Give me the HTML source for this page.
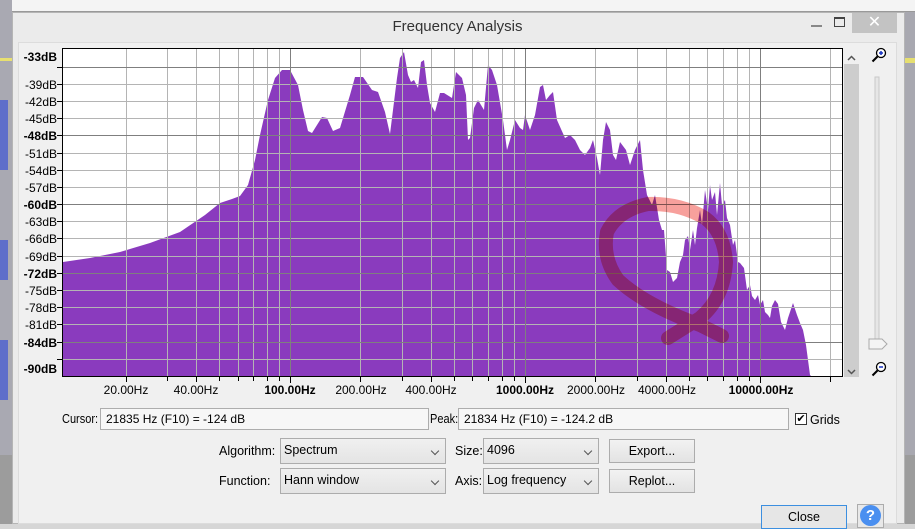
<!DOCTYPE html>
<html><head><meta charset="utf-8"><style>
*{margin:0;padding:0;box-sizing:border-box}
body{width:915px;height:524px;overflow:hidden;background:#d6d6d6;font-family:"Liberation Sans",sans-serif;font-size:12px;color:#000;position:relative}
.a{position:absolute}
.box{position:absolute;background:#f7f7f7;border:1px solid #adadad;height:22px;padding:3px 0 0 5px;font-size:12px}
.sel{position:absolute;background:linear-gradient(#f0f0f0,#e4e4e4);border:1px solid #acacac;height:26px;padding:4px 0 0 3px;font-size:12.5px}
.sel:after{content:"";position:absolute;right:7px;top:9px;width:5px;height:5px;border-right:1.6px solid #555;border-bottom:1.6px solid #555;transform:rotate(45deg)}
.btn{position:absolute;background:linear-gradient(#f2f2f2,#e3e3e3);border:1px solid #acacac;text-align:center;font-size:12.5px;padding-top:4px}
.lbl{position:absolute;font-size:12.5px}
.sq{transform:scaleX(.88);transform-origin:0 0;z-index:2}
</style></head><body>
<!-- background app -->
<div class="a" style="left:0;top:0;width:915px;height:12px;background:#f4f4f4;border-bottom:1px solid #999"></div>
<div class="a" style="left:0;top:0;width:12px;height:524px;background:#a9a9b2"></div>
<div class="a" style="left:0;top:58px;width:12px;height:3px;background:#e8e070"></div>
<div class="a" style="left:0;top:100px;width:8px;height:70px;background:#4b5fd0;opacity:.8"></div>
<div class="a" style="left:0;top:240px;width:8px;height:40px;background:#4b5fd0;opacity:.8"></div>
<div class="a" style="left:0;top:340px;width:8px;height:60px;background:#4b5fd0;opacity:.8"></div>
<div class="a" style="left:0;top:455px;width:12px;height:69px;background:#9c9c9c"></div>
<div class="a" style="left:905px;top:12px;width:10px;height:512px;background:#a8a8b0"></div>
<div class="a" style="left:905px;top:58px;width:10px;height:5px;background:#e6df70"></div>
<div class="a" style="left:905px;top:455px;width:10px;height:69px;background:#9c9c9c"></div>
<!-- dialog frame -->
<div class="a" style="left:12px;top:12px;width:893px;height:512px;background:#ebebeb;border:1px solid #b5b5b5"></div>
<div class="a" style="left:0;top:18px;width:915px;text-align:center;font-size:15px;color:#333">Frequency Analysis</div>
<div class="a" style="left:811px;top:25px;width:11px;height:2px;background:#888"></div>
<div class="a" style="left:834px;top:17px;width:11px;height:10px;border:1px solid #444;border-top-width:2px"></div>
<div class="a" style="left:852px;top:13px;width:45px;height:20px;background:#c3c3c3;color:#fff;text-align:center;font-size:16px;line-height:20px">✕</div>
<div class="a" style="left:18px;top:42px;width:879px;height:482px;background:#f0f0f0;border:1px solid #dcdcdc"></div>

<svg class="a" style="left:0;top:0" width="915" height="524" viewBox="0 0 915 524">
<rect x="62.5" y="48.5" width="780" height="328" fill="#fff"/>
<polygon fill="#8a3bbe" points="63,377 63,262 90,258 120,252 150,243 180,232 205,215 220,203 232,199 240,196 248,185 255,160 260,135 268,100 275,78 282,70 290,70 298,85 303,110 308,131 312,133 322,117 327,118 333,131 340,128 350,95 355,77 363,77 372,90 378,92 385,112 390,134 393,110 397,78 400,58 404,52 408,75 411,82 414,80 418,88 421,62 424,60 427,85 430,103 435,112 440,93 444,93 452,98 456,72 462,78 466,95 468,140 470,138 474,108 478,100 484,110 488,65 492,70 497,85 503,120 507,150 510,140 515,120 520,128 523,130 525,115 530,130 535,115 540,87 543,85 546,100 550,95 553,92 557,120 565,138 570,135 575,140 580,150 585,155 590,148 593,140 597,158 600,175 603,140 606,122 610,130 613,155 616,160 620,142 626,150 630,165 635,150 640,140 643,170 647,195 652,205 655,195 659,220 662,230 664,230 667,270 670,272 673,282 677,278 680,262 683,255 685,240 688,236 690,250 693,230 695,245 697,228 700,210 702,225 705,190 708,210 710,185 712,200 715,192 717,215 720,183 722,205 725,200 727,218 730,225 733,245 735,240 738,262 740,263 744,268 747,290 750,285 752,296 755,300 758,295 760,305 763,300 765,312 768,315 770,318 772,306 775,300 778,304 781,322 785,330 788,318 790,312 793,303 797,315 800,323 803,330 806,345 808,360 810,375 812,377"/>
<g stroke="#b4b4b4" stroke-width="1">
<path d="M126.5 49V377M167.5 49V377M196.5 49V377M219.5 49V377M238.5 49V377M253.5 49V377M267.5 49V377M279.5 49V377M360.5 49V377M402.5 49V377M431.5 49V377M454.5 49V377M472.5 49V377M488.5 49V377M502.5 49V377M514.5 49V377M595.5 49V377M637.5 49V377M666.5 49V377M689.5 49V377M707.5 49V377M723.5 49V377M737.5 49V377M749.5 49V377M830.5 49V377"/>
<path d="M63 84.5H842M63 101.5H842M63 118.5H842M63 153.5H842M63 170.5H842M63 187.5H842M63 221.5H842M63 238.5H842M63 256.5H842M63 290.5H842M63 307.5H842M63 324.5H842M63 359.5H842"/>
</g>
<g stroke="#7f7f7f" stroke-width="1">
<path d="M290.5 49V377M525.5 49V377M760.5 49V377M63 67.5H842M63 135.5H842M63 204.5H842M63 273.5H842M63 342.5H842"/>
</g>
<path d="M668 338 L700 318 Q724 298 726 262 Q724 232 705 218 Q680 203 648 204 Q618 210 607 232 Q602 258 618 280 Q645 305 700 325 L722 336" fill="none" stroke="#f7a09c" stroke-width="14" stroke-linecap="round" stroke-linejoin="round" style="mix-blend-mode:multiply"/>
<rect x="62.5" y="48.5" width="780" height="328" fill="none" stroke="#000"/>
<g stroke="#000"><path d="M57 67.5H63M57 84.5H63M57 101.5H63M57 118.5H63M57 135.5H63M57 153.5H63M57 170.5H63M57 187.5H63M57 204.5H63M57 221.5H63M57 238.5H63M57 256.5H63M57 273.5H63M57 290.5H63M57 307.5H63M57 324.5H63M57 342.5H63M57 359.5H63"/>
<path d="M126.5 377V382M167.5 377V381M196.5 377V382M219.5 377V381M238.5 377V381M253.5 377V381M267.5 377V381M279.5 377V381M290.5 377V383M360.5 377V382M402.5 377V381M431.5 377V382M454.5 377V381M472.5 377V381M488.5 377V381M502.5 377V381M514.5 377V381M525.5 377V383M595.5 377V382M637.5 377V381M666.5 377V382M689.5 377V381M707.5 377V381M723.5 377V381M737.5 377V381M749.5 377V381M760.5 377V383M830.5 377V382"/></g>
<g font-family="Liberation Sans" font-size="12" text-anchor="end" fill="#000">
<text x="57" y="61" font-weight="bold">-33dB</text><text x="57" y="89">-39dB</text><text x="57" y="106">-42dB</text><text x="57" y="123">-45dB</text><text x="57" y="140" font-weight="bold">-48dB</text><text x="57" y="158">-51dB</text><text x="57" y="175">-54dB</text><text x="57" y="192">-57dB</text><text x="57" y="209" font-weight="bold">-60dB</text><text x="57" y="226">-63dB</text><text x="57" y="243">-66dB</text><text x="57" y="261">-69dB</text><text x="57" y="278" font-weight="bold">-72dB</text><text x="57" y="295">-75dB</text><text x="57" y="312">-78dB</text><text x="57" y="329">-81dB</text><text x="57" y="347" font-weight="bold">-84dB</text><text x="57" y="373" font-weight="bold">-90dB</text>
</g>
<g font-family="Liberation Sans" font-size="12" text-anchor="middle" fill="#000">
<text x="126" y="394">20.00Hz</text><text x="196" y="394">40.00Hz</text><text x="290" y="394" font-weight="bold">100.00Hz</text><text x="361" y="394">200.00Hz</text><text x="431" y="394">400.00Hz</text><text x="525" y="394" font-weight="bold">1000.00Hz</text><text x="596" y="394">2000.00Hz</text><text x="667" y="394">4000.00Hz</text><text x="761" y="394" font-weight="bold">10000.00Hz</text>
</g>
<!-- scrollbar -->
<rect x="844" y="64" width="15" height="313" fill="#cdcdcd"/>
<path d="M848 60l3.5-3.5 3.5 3.5M848 370l3.5 3.5 3.5-3.5" fill="none" stroke="#555" stroke-width="1.5"/>
<rect x="875" y="77" width="4" height="264" fill="#e6e6e6" stroke="#c8c8c8"/>
<path d="M869 339h13l5 5-5 5h-13z" fill="#f4f4f4" stroke="#aaa"/>
<circle cx="881" cy="53" r="4.5" fill="#fff" stroke="#000" stroke-width="1.3"/>
<path d="M879 53h4M881 51v4" stroke="#1530c0" stroke-width="1.5"/>
<path d="M877.5 56.5l-5 5" stroke="#000" stroke-width="2"/>
<circle cx="881" cy="367" r="4.5" fill="#fff" stroke="#000" stroke-width="1.3"/>
<path d="M879 367h4" stroke="#1530c0" stroke-width="1.5"/>
<path d="M877.5 370.5l-5 5" stroke="#000" stroke-width="2"/>
</svg>

<div class="lbl sq" style="left:62px;top:412px">Cursor:</div>
<div class="box" style="left:100px;top:408px;width:329px">21835 Hz (F10) = -124 dB</div>
<div class="lbl sq" style="left:430px;top:412px">Peak:</div>
<div class="box" style="left:458px;top:408px;width:331px">21834 Hz (F10) = -124.2 dB</div>
<div class="a" style="left:795px;top:413px;width:12px;height:12px;border:1px solid #333;background:#fff;font-size:11px;line-height:10px;text-align:center">✔</div>
<div class="lbl" style="left:810px;top:413px">Grids</div>

<div class="lbl" style="left:219px;top:444px">Algorithm:</div>
<div class="sel" style="left:280px;top:438px;width:166px">Spectrum</div>
<div class="lbl" style="left:455px;top:444px">Size:</div>
<div class="sel" style="left:483px;top:438px;width:116px">4096</div>
<div class="btn" style="left:609px;top:439px;width:86px;height:24px">Export...</div>

<div class="lbl" style="left:219px;top:474px">Function:</div>
<div class="sel" style="left:280px;top:468px;width:166px">Hann window</div>
<div class="lbl" style="left:455px;top:474px">Axis:</div>
<div class="sel" style="left:483px;top:468px;width:116px">Log frequency</div>
<div class="btn" style="left:609px;top:469px;width:86px;height:24px">Replot...</div>

<div class="btn" style="left:761px;top:505px;width:86px;height:24px;border-color:#3c8fe0;background:#e6e6e6">Close</div>
<div class="a" style="left:857px;top:504px;width:27px;height:24px;border:1px solid #acacac;background:#e8e8e8"></div>
<div class="a" style="left:860px;top:505px;width:21px;height:21px;border-radius:50%;background:#4a8ff0;color:#fff;font-weight:bold;font-size:15px;text-align:center;line-height:21px">?</div>
</body></html>
